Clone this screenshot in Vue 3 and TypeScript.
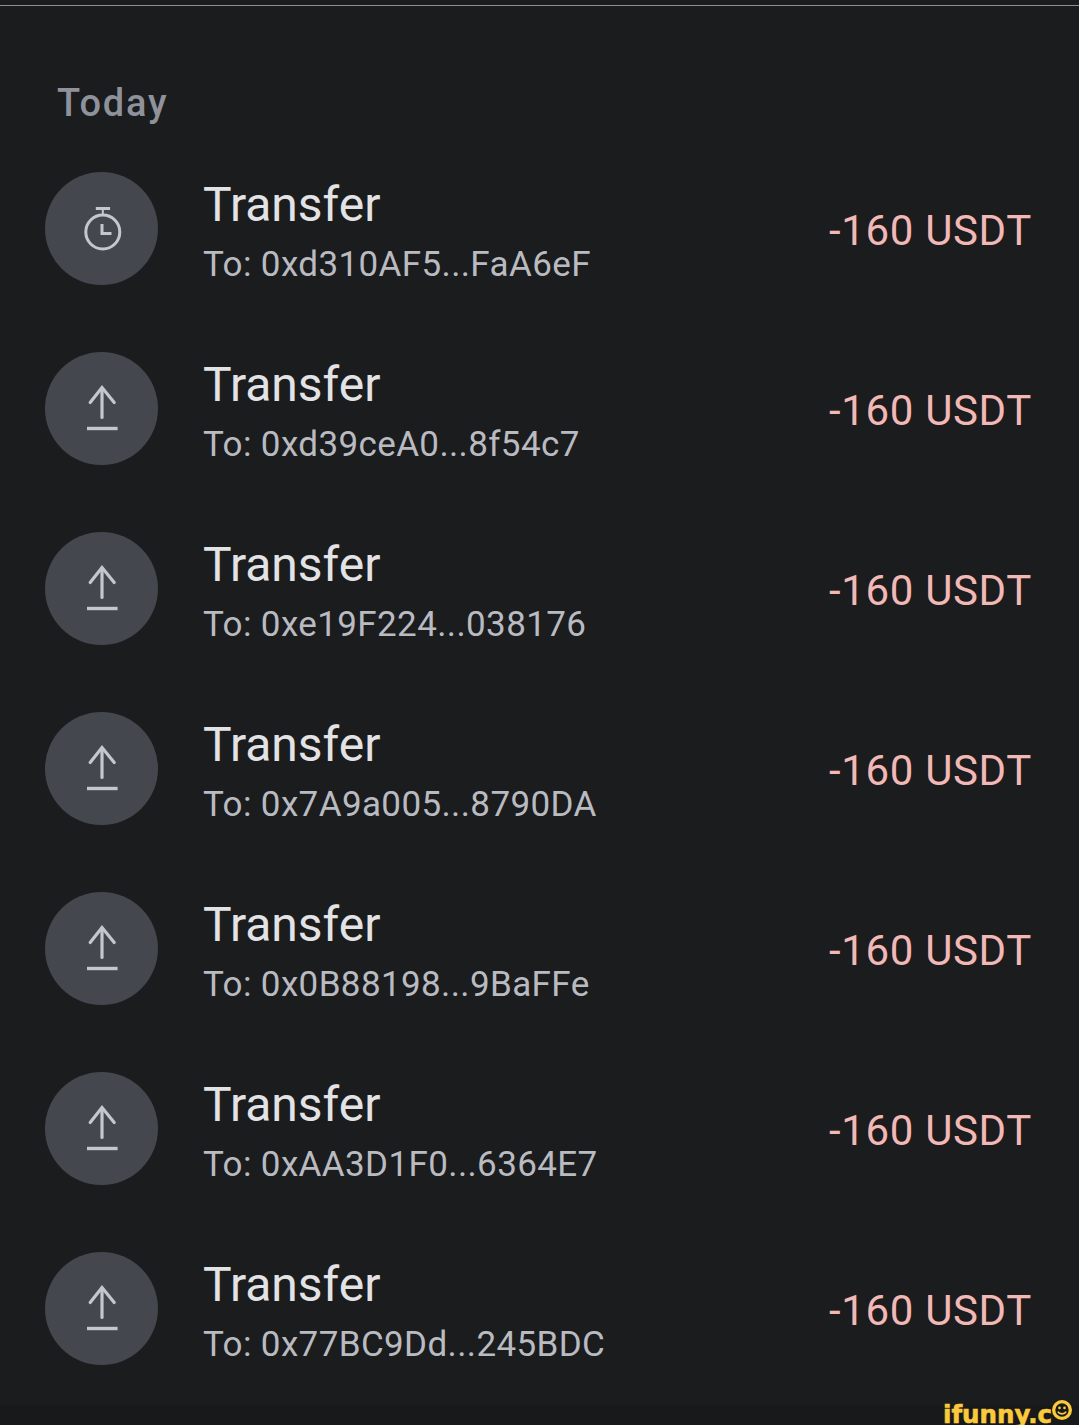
<script setup lang="ts">
interface Tx {
  to: string
  pending?: boolean
}

const rows: Tx[] = [
  { to: '0xd310AF5...FaA6eF', pending: true },
  { to: '0xd39ceA0...8f54c7' },
  { to: '0xe19F224...038176' },
  { to: '0x7A9a005...8790DA' },
  { to: '0x0B88198...9BaFFe' },
  { to: '0xAA3D1F0...6364E7' },
  { to: '0x77BC9Dd...245BDC' },
]
</script>

<template>
  <div class="page">
    <div class="top-line"></div>
    <h2 class="day">Today</h2>
    <ul class="list">
      <li v-for="row in rows" :key="row.to" class="row">
        <div class="badge">
          <svg v-if="row.pending" class="icon" viewBox="0 0 48 48" fill="none" stroke="#c4c7ce">
            <path d="M17.8 4.5h14.3" stroke-width="3" />
            <path d="M24.8 5v5" stroke-width="2" />
            <circle cx="24.8" cy="28" r="17" stroke-width="3" />
            <path d="M24 20v9.5h9.5" stroke-width="3" />
          </svg>
          <svg v-else class="icon" viewBox="0 0 48 48" fill="none" stroke="#c4c7ce" stroke-width="3.2">
            <path d="M24 33.5V4" stroke-linecap="round" />
            <path d="M12.2 18.5 24 3.5l12.2 15" stroke-linecap="round" />
            <path d="M9 44.5h30.6" stroke-width="3.4" />
          </svg>
        </div>
        <div class="info">
          <div class="name">Transfer</div>
          <div class="addr">To: {{ row.to }}</div>
        </div>
        <div class="amount">-160 USDT</div>
      </li>
    </ul>
    <div class="footer"></div>
    <div class="wm">ifunny.c<svg class="smile" viewBox="0 0 24 24"><circle cx="12" cy="12" r="10" fill="none" stroke="#fbc93c" stroke-width="4" /><circle cx="9" cy="9.5" r="1.6" fill="#fbc93c" /><circle cx="15" cy="9.5" r="1.6" fill="#fbc93c" /><path d="M7 14c2 3.5 8 3.5 10 0" fill="none" stroke="#fbc93c" stroke-width="2" /></svg></div>
  </div>
</template>

<style>
body {
  margin: 0;
  background: #1b1c1e;
}
</style>

<style scoped>
.page {
  position: relative;
  width: 1079px;
  height: 1425px;
  overflow: hidden;
  background: #1b1c1e;
  font-family: Roboto, "Liberation Sans", sans-serif;
}

.top-line {
  height: 1px;
  margin-top: 5px;
  background: #8d8f92;
}

.day {
  margin: 0;
  padding: 75px 0 13px 57px;
  font-size: 38px;
  line-height: 44px;
  font-weight: 500;
  letter-spacing: 1.8px;
  color: #8f929b;
}

.list {
  list-style: none;
  margin: 0;
  padding: 0;
}

.row {
  display: flex;
  align-items: center;
  height: 180px;
  padding: 0 47px 0 45px;
}

.badge {
  flex: none;
  display: flex;
  align-items: center;
  justify-content: center;
  width: 113px;
  height: 113px;
  border-radius: 50%;
  background: #44484e;
}

.icon {
  width: 48px;
  height: 48px;
  overflow: visible;
}

.info {
  flex: 1;
  margin-left: 45px;
  padding-top: 7px;
}

.name {
  font-size: 48px;
  line-height: 56px;
  color: #e3e3e6;
}

.addr {
  margin-top: 11px;
  font-size: 35px;
  line-height: 42px;
  letter-spacing: 0.38px;
  color: #b9bbc1;
}

.amount {
  padding-top: 6px;
  font-size: 42px;
  line-height: 50px;
  letter-spacing: 0.65px;
  color: #f2b8b5;
}

.footer {
  position: absolute;
  left: 0;
  right: 0;
  bottom: 0;
  height: 20px;
  background: #18191b;
}

.wm {
  position: absolute;
  right: 7px;
  bottom: -8px;
  display: flex;
  align-items: center;
  font-family: "DejaVu Sans", sans-serif;
  font-size: 24.5px;
  line-height: 36px;
  font-weight: 700;
  color: #fbc93c;
  -webkit-text-stroke: 0.6px #fbc93c;
}

.smile {
  width: 20px;
  height: 20px;
  margin-bottom: 10px;
}
</style>
